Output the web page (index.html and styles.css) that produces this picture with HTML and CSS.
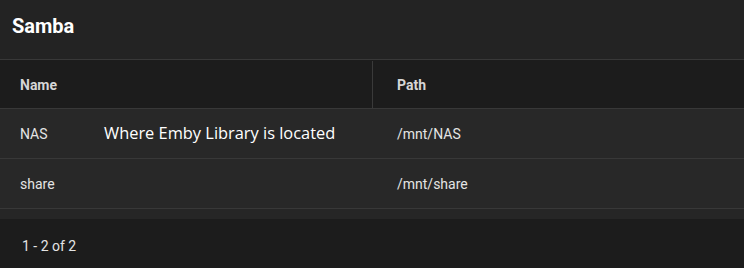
FILE: index.html
```html
<!DOCTYPE html>
<html>
<head>
<meta charset="utf-8">
<link rel="stylesheet" href="styles.css">
</head>
<body>
<div class="card">
  <div class="title-bar"><h1 class="title">Samba</h1></div>
  <div class="grid">
    <div class="row head">
      <div class="cell col-name">Name</div>
      <div class="cell col-path">Path</div>
    </div>
    <div class="row body">
      <div class="cell col-name"><span class="name">NAS</span><span class="note">Where Emby Library is located</span></div>
      <div class="cell col-path">/mnt/NAS</div>
    </div>
    <div class="row body">
      <div class="cell col-name"><span class="name">share</span></div>
      <div class="cell col-path">/mnt/share</div>
    </div>
    <div class="spacer"></div>
  </div>
  <div class="footer">1 - 2 of 2</div>
</div>
</body>
</html>
```
FILE: styles.css
```css
* { box-sizing: border-box; }
html, body { margin: 0; padding: 0; background: #1c1c1c; }
body { font-family: Roboto, "Liberation Sans", sans-serif; width: 744px; height: 268px; overflow: hidden; }
.card { display: flex; flex-direction: column; }
.title-bar { height: 60px; background: #232323; border-bottom: 1px solid #383838; display: flex; align-items: center; padding-left: 12px; padding-bottom: 8px; }
.title { margin: 0; font-size: 20px; font-weight: 700; color: #ffffff; }
.grid { display: flex; flex-direction: column; }
.row { display: flex; height: 50px; border-bottom: 1px solid #383838; }
.row.head { height: 49px; background: #1c1c1c; font-weight: 700; color: #d6d6d6; padding-top: 1px; }
.row.body { background: #282828; color: #e4e4e4; }
.cell { display: flex; align-items: center; font-size: 14px; }
.col-name { width: 373px; padding-left: 20px; }
.head .col-name { border-right: 1px solid #3a3a3a; }
.col-path { flex: 1; padding-left: 24px; }
.name { width: 84px; }
.note { font-family: "Open Sans", sans-serif; font-size: 16.4px; color: #ffffff; margin-top: -2px; }
.spacer { height: 10px; background: #262626; }
.footer { height: 50px; background: #1c1c1c; color: #e4e4e4; font-size: 14px; display: flex; align-items: center; padding-left: 22px; padding-top: 4px; }
```
